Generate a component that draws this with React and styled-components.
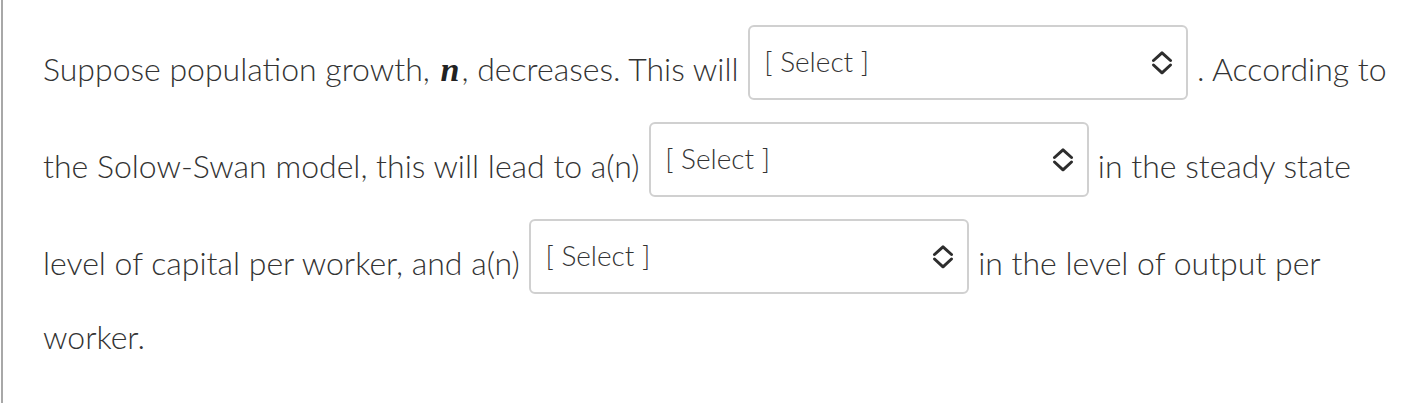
import React from "react";
import styled, { createGlobalStyle } from "styled-components";

const Global = createGlobalStyle`
  html, body { margin: 0; padding: 0; background: #fff; }
  body { font-family: Lato, "Noto Sans", sans-serif; }
`;

const Page = styled.div`
  margin-left: 1px;
  border-left: 2px solid #a8a8a8;
  min-height: 403px;
  box-sizing: border-box;
  padding: 14px 20px 0 40px;
`;

const Question = styled.p`
  margin: 0;
  font-family: Lato, "Noto Sans", sans-serif;
  font-size: 32px;
  line-height: 64px;
  color: #333;
  font-weight: 300;
`;

const MathVar = styled.i`
  font-family: "Liberation Serif", "DejaVu Serif", serif;
  font-weight: 700;
  font-style: italic;
  font-size: 34px;
  color: #222;
  padding: 0 2px 0 2px;
`;

const SelectWrap = styled.span`
  display: inline-block;
  position: relative;
  overflow: hidden;
  vertical-align: -30px;
  margin: 11px 0 11px 1px;
  width: 440px;
  height: 75px;
`;

const Dropdown = styled.select`
  appearance: none;
  -webkit-appearance: none;
  box-sizing: border-box;
  width: 100%;
  height: 100%;
  margin: 0;
  padding: 0 50px 4px 14px;
  border: 2px solid #d0d0d0;
  border-radius: 6px;
  background: #fff;
  font-family: Lato, "Noto Sans", sans-serif;
  font-size: 28px;
  font-weight: 300;
  color: #333;
  outline: none;
`;

const Chevrons = styled.svg`
  position: absolute;
  right: 15px;
  top: 50%;
  transform: translateY(-50%);
  width: 22px;
  height: 24px;
  pointer-events: none;
`;

function Select() {
  return (
    <SelectWrap>
      <Dropdown defaultValue="">
        <option value="">[ Select ]</option>
      </Dropdown>
      <Chevrons viewBox="0 0 22 24" fill="none" stroke="#2d2d2d" strokeWidth="3" strokeLinecap="round" strokeLinejoin="round">
        <polyline points="2.5,9.5 11,1.8 19.5,9.5" />
        <polyline points="2.5,14 11,21.8 19.5,14" />
      </Chevrons>
    </SelectWrap>
  );
}

export default function App() {
  return (
    <>
      <Global />
      <Page>
        <Question>
          Suppose population growth, <MathVar>n</MathVar>, decreases. This will <Select /> . According to the Solow-Swan model, this will lead to a(n) <Select /> in the steady state level of capital per worker, and a(n) <Select /> in the level of output per worker.
        </Question>
      </Page>
    </>
  );
}
